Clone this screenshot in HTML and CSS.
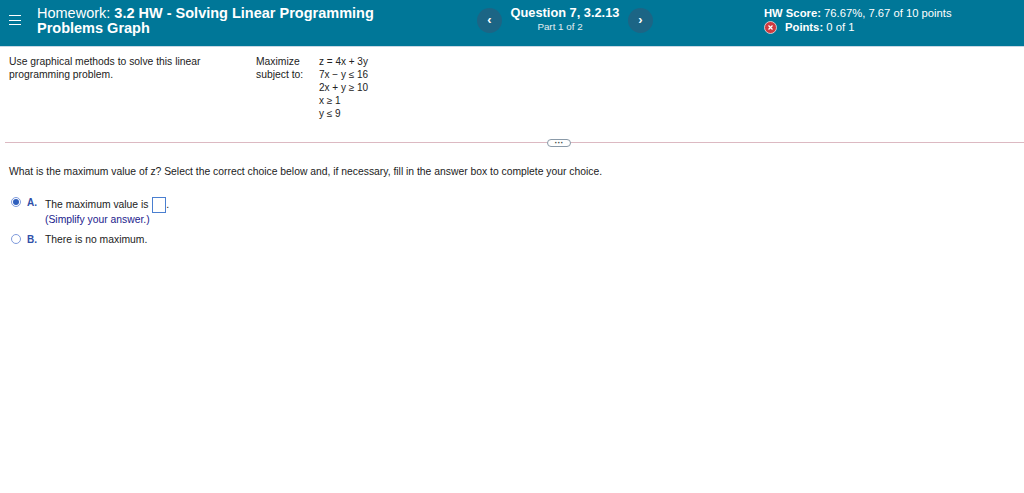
FILE: index.html
```html
<!DOCTYPE html>
<html lang="en">
<head>
    <meta charset="UTF-8">
    <title>Homework</title>
    <link rel="stylesheet" href="styles.css">
</head>
<body>
    <div class="top-bar">
        <div class="menu-icon"><span></span><span></span><span></span></div>
        <div class="hw-title">Homework: <b>3.2 HW - Solving Linear Programming<br>Problems Graph</b></div>
        <div class="question-nav">
            <div class="nav-btn">&#8249;</div>
            <div class="question-info">
                <div class="question-name">Question 7, 3.2.13</div>
                <div class="question-part">Part 1 of 2</div>
            </div>
            <div class="nav-btn">&#8250;</div>
        </div>
        <div class="score">
            <div><b>HW Score:</b> 76.67%, 7.67 of 10 points</div>
            <div class="points">
                <svg class="x-icon" width="13" height="13" viewBox="0 0 13 13">
                    <circle cx="6.5" cy="6.5" r="6" fill="#d03a3f" stroke="#e6e6e6" stroke-width="0.8"/>
                    <path d="M4.5 4.5l4 4M8.5 4.5l-4 4" stroke="#fff" stroke-width="1.2"/>
                </svg>
                <span><b>Points:</b> 0 of 1</span>
            </div>
        </div>
    </div>

    <div class="problem">
        <div class="instructions">Use graphical methods to solve this linear<br>programming problem.</div>
        <div class="labels">Maximize<br>subject to:</div>
        <div class="constraints">
            z = 4x + 3y<br>
            7x &minus; y &le; 16<br>
            2x + y &ge; 10<br>
            x &ge; 1<br>
            y &le; 9
        </div>
    </div>

    <div class="divider"><div class="more-btn">&middot;&middot;&middot;</div></div>

    <div class="question">What is the maximum value of z? Select the correct choice below and, if necessary, fill in the answer box to complete your choice.</div>

    <div class="choice choice-a">
        <div class="radio selected"></div>
        <div class="letter">A.</div>
        <div>
            <div class="answer-line">The maximum value is <span class="answer-box"></span>.</div>
            <div class="hint">(Simplify your answer.)</div>
        </div>
    </div>
    <div class="choice">
        <div class="radio"></div>
        <div class="letter">B.</div>
        <div>There is no maximum.</div>
    </div>
</body>
</html>
```

FILE: styles.css
```css
body {
    margin: 0;
    font-family: "Liberation Sans", Arial, sans-serif;
    font-size: 10.35px;
    color: #222;
    background-color: white;
}
.top-bar {
    height: 47px;
    box-sizing: border-box;
    background-color: #007798;
    border-bottom: 1px solid #c8d8e4;
    color: white;
    display: flex;
    align-items: flex-start;
}
.menu-icon {
    width: 12px;
    margin: 15px 0 0 9px;
    display: flex;
    flex-direction: column;
    gap: 3.5px;
}
.menu-icon span {
    height: 1px;
    background-color: white;
}
.hw-title {
    margin: 6px 0 0 16px;
    width: 440px;
    font-size: 14.5px;
    line-height: 15px;
}
.question-nav {
    display: flex;
    align-items: flex-start;
    width: 176px;
    justify-content: space-between;
    padding-top: 8px;
}
.nav-btn {
    width: 25px;
    height: 25px;
    border-radius: 50%;
    background-color: #1c6585;
    text-align: center;
    font-size: 13px;
    font-weight: bold;
    line-height: 23px;
}
.question-info {
    text-align: center;
    margin-top: -3px;
}
.question-name {
    font-size: 12.8px;
    font-weight: bold;
    line-height: 15px;
}
.question-part {
    font-size: 9.8px;
    line-height: 13px;
    color: #e4eef2;
    padding-right: 10px;
}
.score {
    margin: 6px 0 0 111px;
    font-size: 11.25px;
    line-height: 14px;
}
.points {
    display: flex;
    align-items: center;
    gap: 8px;
}
.problem {
    display: flex;
    padding: 8px 0 0 9px;
    line-height: 13px;
    height: 86px;
    box-sizing: border-box;
}
.instructions {
    width: 247px;
}
.labels {
    width: 63px;
}
.constraints {
    font-size: 10px;
}
.divider {
    height: 1px;
    background-color: #dcb9c2;
    margin: 9px 0 0 5px;
    display: flex;
    align-items: center;
}
.more-btn {
    width: 22px;
    height: 6px;
    margin-left: 542px;
    background-color: white;
    border: 1px solid #8a9aa8;
    border-radius: 4px;
    text-align: center;
    font-size: 9px;
    font-weight: bold;
    line-height: 6px;
    color: #444;
}
.question {
    margin: 22px 0 0 9px;
    line-height: 13px;
}
.choice {
    display: flex;
    align-items: flex-start;
    padding-left: 11px;
    line-height: 13px;
}
.choice-a {
    margin-top: 18px;
    margin-bottom: 7px;
}
.radio {
    width: 8px;
    height: 8px;
    border: 1px solid #7f9bdc;
    border-radius: 50%;
    background-color: white;
    margin-top: 1px;
    flex-shrink: 0;
    position: relative;
}
.radio.selected::after {
    content: "";
    position: absolute;
    top: 1px;
    left: 1px;
    width: 6px;
    height: 6px;
    border-radius: 50%;
    background-color: #2f5fbd;
}
.letter {
    width: 18px;
    margin-left: 6px;
    color: #2f4fa8;
    font-weight: bold;
    font-size: 10px;
}
.answer-line {
    display: flex;
    align-items: flex-start;
    padding-top: 2px;
    white-space: pre;
}
.answer-box {
    width: 12px;
    height: 14px;
    margin: -1px 0 0 1px;
    border: 1px solid #4a7fd0;
}
.hint {
    color: #1a1a8c;
}
```
